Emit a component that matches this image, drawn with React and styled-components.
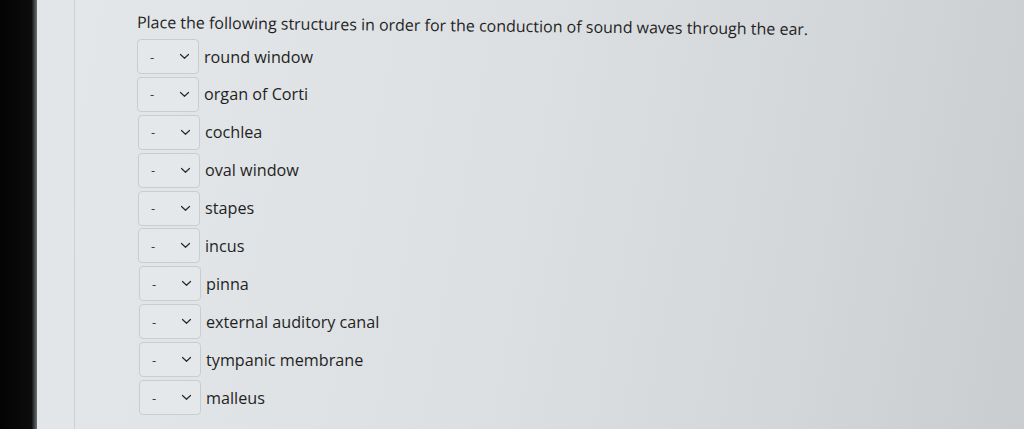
import React from "react";
import styled, { createGlobalStyle } from "styled-components";

const GlobalStyle = createGlobalStyle`
  html, body {
    margin: 0;
    padding: 0;
    height: 429px;
    overflow: hidden;
    background: #0a0a0a;
  }
  body {
    font-family: "Open Sans", "Noto Sans", sans-serif;
  }
`;

const Screen = styled.div`
  display: flex;
  height: 429px;
  width: 1024px;
`;

const Bezel = styled.div`
  width: 37px;
  flex-shrink: 0;
  background: linear-gradient(to right, #030303 0%, #0c0c0c 85%, #6f7274 100%);
`;

const SidePanel = styled.div`
  width: 37px;
  flex-shrink: 0;
  background: #e3e6e9;
  border-right: 1px solid #cdd1d4;
`;

const Main = styled.main`
  flex: 1;
  padding: 12px 0 0 62px;
  background: linear-gradient(100deg, #e4e7e9 0%, #dde0e3 45%, #d3d7da 75%, #c9cdd0 100%);
`;

const Prompt = styled.p`
  margin: 0 0 6px 0;
  font-size: 16px;
  line-height: 21px;
  color: #1f1f1f;
  transform: rotate(0.6deg);
  transform-origin: left center;
`;

const OrderList = styled.div`
  display: flex;
  flex-direction: column;
  gap: 2.9px;
`;

const Row = styled.div`
  display: flex;
  align-items: center;
  gap: 5px;
  padding-left: ${(p) => p.$shift}px;
`;

const SelectBox = styled.div`
  width: 62px;
  height: 35px;
  box-sizing: border-box;
  border: 1px solid #c9cdd1;
  border-radius: 4px;
  background: #e5e8ea;
  display: flex;
  align-items: center;
  justify-content: space-between;
  padding: 0 8px 0 12px;
  color: #3a3a3a;
  font-size: 13px;
`;

const Label = styled.span`
  font-size: 16.2px;
  color: #1f1f1f;
`;

const Chevron = () => (
  <svg width="11" height="7" viewBox="0 0 11 7">
    <path d="M1.5 1.5 L5.5 5.3 L9.5 1.5" fill="none" stroke="#2b2b2b" strokeWidth="1.2" strokeLinecap="round" strokeLinejoin="round" />
  </svg>
);

const items = [
  "round window",
  "organ of Corti",
  "cochlea",
  "oval window",
  "stapes",
  "incus",
  "pinna",
  "external auditory canal",
  "tympanic membrane",
  "malleus",
];

function App() {
  return (
    <>
      <GlobalStyle />
      <Screen>
        <Bezel />
        <SidePanel />
        <Main>
          <Prompt>
            Place the following structures in order for the conduction of sound waves through the ear.
          </Prompt>
          <OrderList>
            {items.map((item, i) => (
              <Row key={item} $shift={Math.round(i / 4)}>
                <SelectBox>
                  <span>-</span>
                  <Chevron />
                </SelectBox>
                <Label>{item}</Label>
              </Row>
            ))}
          </OrderList>
        </Main>
      </Screen>
    </>
  );
}

export default App;
